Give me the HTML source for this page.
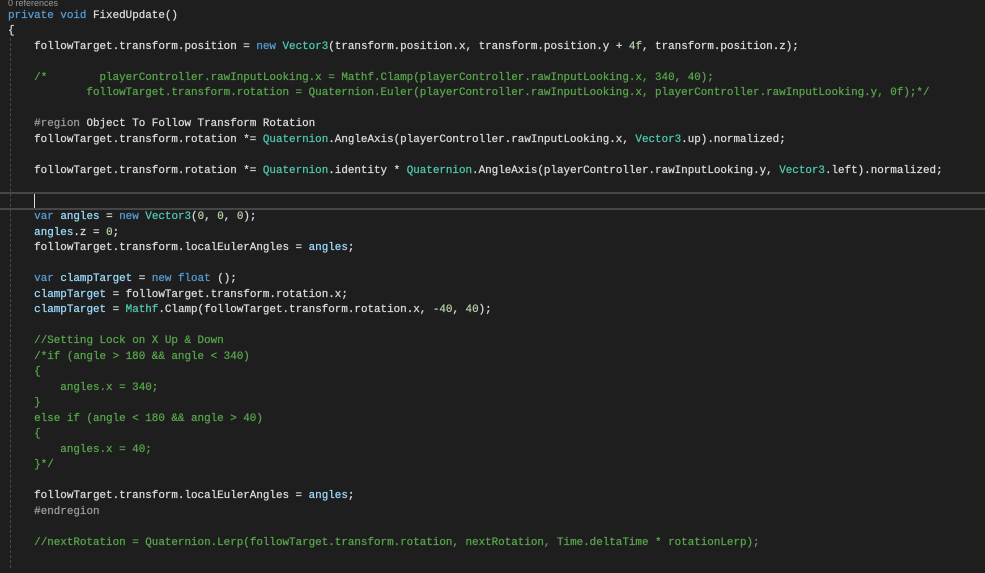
<!DOCTYPE html>
<html><head><meta charset="utf-8"><style>
html,body{margin:0;padding:0;background:#1e1e1e;width:985px;height:573px;overflow:hidden}
.ref{position:absolute;left:8px;top:-2px;font:9px "Liberation Sans",sans-serif;color:#999}
.code{position:absolute;left:8px;top:8.5px;font-family:"Liberation Mono",monospace;font-size:10.9px;line-height:15.5px;color:#dcdcdc;white-space:pre;-webkit-text-stroke:0.25px currentColor}
.cur{position:absolute;left:0;top:192px;width:985px;height:14px;border-top:2px solid #464646;border-bottom:2px solid #464646}
.caret{position:absolute;left:34px;top:194px;width:1px;height:14px;background:#dcdcdc}
.guide{position:absolute;left:10px;top:38px;height:530px;border-left:1px dashed #4a4a4a}
.k{color:#569cd6}.t{color:#4ec9b0}.c{color:#57a64a}.n{color:#b5cea8}.v{color:#9cdcfe}.p{color:#9b9b9b}
</style></head><body>
<div class="ref">0 references</div>
<div class="cur"></div><div class="caret"></div><div class="guide"></div>
<div class="code"><span class="k">private</span> <span class="k">void</span> FixedUpdate()
{
    followTarget.transform.position = <span class="k">new</span> <span class="t">Vector3</span>(transform.position.x, transform.position.y + <span class="n">4f</span>, transform.position.z);

    <span class="c">/*        playerController.rawInputLooking.x = Mathf.Clamp(playerController.rawInputLooking.x, 340, 40);
            followTarget.transform.rotation = Quaternion.Euler(playerController.rawInputLooking.x, playerController.rawInputLooking.y, 0f);*/</span>

    <span class="p">#region</span> Object To Follow Transform Rotation
    followTarget.transform.rotation *= <span class="t">Quaternion</span>.AngleAxis(playerController.rawInputLooking.x, <span class="t">Vector3</span>.up).normalized;

    followTarget.transform.rotation *= <span class="t">Quaternion</span>.identity * <span class="t">Quaternion</span>.AngleAxis(playerController.rawInputLooking.y, <span class="t">Vector3</span>.left).normalized;


    <span class="k">var</span> <span class="v">angles</span> = <span class="k">new</span> <span class="t">Vector3</span>(<span class="n">0</span>, <span class="n">0</span>, <span class="n">0</span>);
    <span class="v">angles</span>.z = <span class="n">0</span>;
    followTarget.transform.localEulerAngles = <span class="v">angles</span>;

    <span class="k">var</span> <span class="v">clampTarget</span> = <span class="k">new</span> <span class="k">float</span> ();
    <span class="v">clampTarget</span> = followTarget.transform.rotation.x;
    <span class="v">clampTarget</span> = <span class="t">Mathf</span>.Clamp(followTarget.transform.rotation.x, -<span class="n">40</span>, <span class="n">40</span>);

    <span class="c">//Setting Lock on X Up &amp; Down
    /*if (angle &gt; 180 &amp;&amp; angle &lt; 340)
    {
        angles.x = 340;
    }
    else if (angle &lt; 180 &amp;&amp; angle &gt; 40)
    {
        angles.x = 40;
    }*/</span>

    followTarget.transform.localEulerAngles = <span class="v">angles</span>;
    <span class="p">#endregion</span>

    <span class="c">//nextRotation = Quaternion.Lerp(followTarget.transform.rotation, nextRotation, Time.deltaTime * rotationLerp);</span>
</div>
</body></html>
